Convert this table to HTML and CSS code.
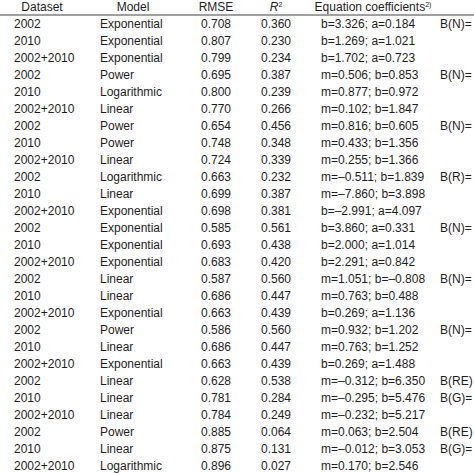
FILE: index.html
```html
<!DOCTYPE html>
<html>
<head>
<meta charset="utf-8">
<link rel="stylesheet" href="styles.css">
</head>
<body>
<table class="fit">
<colgroup>
<col class="c-data"><col class="c-model"><col class="c-rmse"><col class="c-r2"><col class="c-eq"><col class="c-note">
</colgroup>
<thead>
<tr><th>Dataset</th><th>Model</th><th>RMSE</th><th><i>R</i><sup>2</sup></th><th class="h-eq">Equation coefficients<sup>2)</sup></th><th></th></tr>
</thead>
<tbody>
<tr><td>2002</td><td>Exponential</td><td>0.708</td><td>0.360</td><td>b=3.326; a=0.184</td><td>B(N)=</td></tr>
<tr><td>2010</td><td>Exponential</td><td>0.807</td><td>0.230</td><td>b=1.269; a=1.021</td><td></td></tr>
<tr><td>2002+2010</td><td>Exponential</td><td>0.799</td><td>0.234</td><td>b=1.702; a=0.723</td><td></td></tr>
<tr><td>2002</td><td>Power</td><td>0.695</td><td>0.387</td><td>m=0.506; b=0.853</td><td>B(N)=</td></tr>
<tr><td>2010</td><td>Logarithmic</td><td>0.800</td><td>0.239</td><td>m=0.877; b=0.972</td><td></td></tr>
<tr><td>2002+2010</td><td>Linear</td><td>0.770</td><td>0.266</td><td>m=0.102; b=1.847</td><td></td></tr>
<tr><td>2002</td><td>Power</td><td>0.654</td><td>0.456</td><td>m=0.816; b=0.605</td><td>B(N)=</td></tr>
<tr><td>2010</td><td>Power</td><td>0.748</td><td>0.348</td><td>m=0.433; b=1.356</td><td></td></tr>
<tr><td>2002+2010</td><td>Linear</td><td>0.724</td><td>0.339</td><td>m=0.255; b=1.366</td><td></td></tr>
<tr><td>2002</td><td>Logarithmic</td><td>0.663</td><td>0.232</td><td>m=–0.511; b=1.839</td><td>B(R)=</td></tr>
<tr><td>2010</td><td>Linear</td><td>0.699</td><td>0.387</td><td>m=–7.860; b=3.898</td><td></td></tr>
<tr><td>2002+2010</td><td>Exponential</td><td>0.698</td><td>0.381</td><td>b=–2.991; a=4.097</td><td></td></tr>
<tr><td>2002</td><td>Exponential</td><td>0.585</td><td>0.561</td><td>b=3.860; a=0.331</td><td>B(N)=</td></tr>
<tr><td>2010</td><td>Exponential</td><td>0.693</td><td>0.438</td><td>b=2.000; a=1.014</td><td></td></tr>
<tr><td>2002+2010</td><td>Exponential</td><td>0.683</td><td>0.420</td><td>b=2.291; a=0.842</td><td></td></tr>
<tr><td>2002</td><td>Linear</td><td>0.587</td><td>0.560</td><td>m=1.051; b=–0.808</td><td>B(N)=</td></tr>
<tr><td>2010</td><td>Linear</td><td>0.686</td><td>0.447</td><td>m=0.763; b=0.488</td><td></td></tr>
<tr><td>2002+2010</td><td>Exponential</td><td>0.663</td><td>0.439</td><td>b=0.269; a=1.136</td><td></td></tr>
<tr><td>2002</td><td>Power</td><td>0.586</td><td>0.560</td><td>m=0.932; b=1.202</td><td>B(N)=</td></tr>
<tr><td>2010</td><td>Linear</td><td>0.686</td><td>0.447</td><td>m=0.763; b=1.252</td><td></td></tr>
<tr><td>2002+2010</td><td>Exponential</td><td>0.663</td><td>0.439</td><td>b=0.269; a=1.488</td><td></td></tr>
<tr><td>2002</td><td>Linear</td><td>0.628</td><td>0.538</td><td>m=–0.312; b=6.350</td><td>B(RE)</td></tr>
<tr><td>2010</td><td>Linear</td><td>0.781</td><td>0.284</td><td>m=–0.295; b=5.476</td><td>B(G)=</td></tr>
<tr><td>2002+2010</td><td>Linear</td><td>0.784</td><td>0.249</td><td>m=–0.232; b=5.217</td><td></td></tr>
<tr><td>2002</td><td>Power</td><td>0.885</td><td>0.064</td><td>m=0.063; b=2.504</td><td>B(RE)</td></tr>
<tr><td>2010</td><td>Linear</td><td>0.875</td><td>0.131</td><td>m=–0.012; b=3.053</td><td>B(G)=</td></tr>
<tr><td>2002+2010</td><td>Logarithmic</td><td>0.896</td><td>0.027</td><td>m=0.170; b=2.546</td><td></td></tr>
</tbody>
</table>
</body>
</html>
```
FILE: styles.css
```css
html, body {
  margin: 0;
  padding: 0;
  background: #fff;
  overflow: hidden;
}
body {
  font-family: "Liberation Sans", Arial, sans-serif;
  font-size: 12px;
  color: #1e1e1e;
}
.fit {
  border-collapse: collapse;
  table-layout: fixed;
  width: 474px;
}
.c-data { width: 84px; }
.c-model { width: 98px; }
.c-rmse { width: 68px; }
.c-r2 { width: 52px; }
.c-eq { width: 138px; }
.c-note { width: 34px; }
.fit th {
  font-weight: normal;
  height: 14px;
  line-height: 14px;
  padding: 0;
  text-align: center;
  white-space: nowrap;
  border-bottom: 2px solid #a0a0a0;
}
.fit th sup {
  font-size: 7px;
  line-height: 0;
  vertical-align: 4px;
}
.fit th.h-eq { padding-left: 4px; }
.fit td {
  height: 17px;
  line-height: 17px;
  padding: 0;
  white-space: nowrap;
}
.fit td:nth-child(1) { padding-left: 14px; }
.fit td:nth-child(2) { padding-left: 16px; }
.fit td:nth-child(3),
.fit td:nth-child(4) { text-align: center; }
.fit td:nth-child(5) { padding-left: 19px; }
.fit td:nth-child(6) { padding-left: 0; overflow: visible; }
```
